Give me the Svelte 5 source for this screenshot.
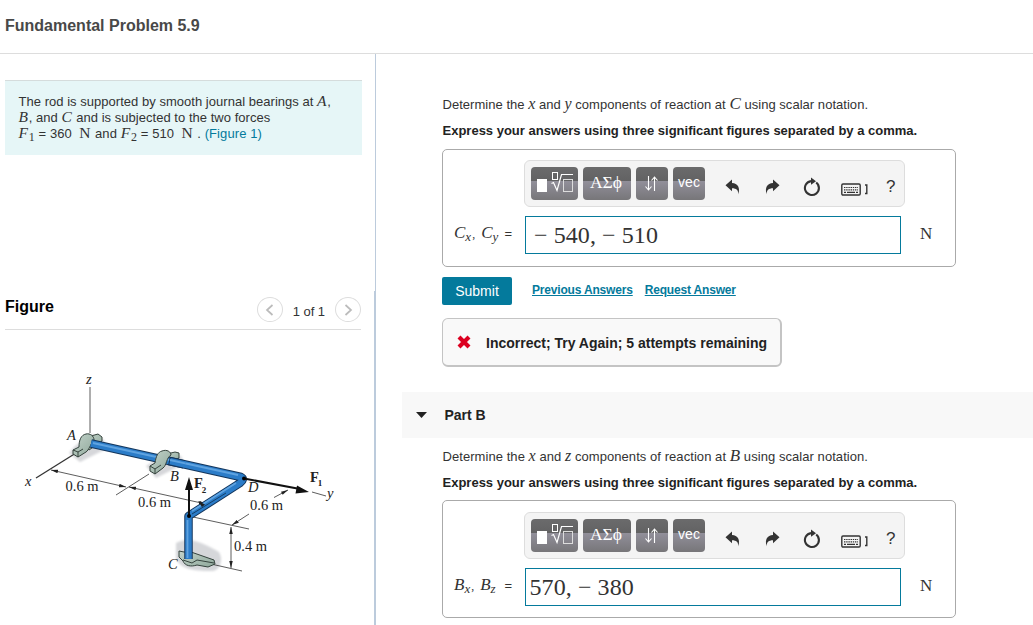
<script>
	let answerC = $state('− 540, − 510');
	let answerB = $state('570, − 380');
	let open = $state(true);
</script>

{#snippet toolbar()}
	<div class="toolbar">
		<button class="key template" aria-label="Templates">
			<svg width="47" height="33" viewBox="0 0 47 33" fill="none" stroke="#fff">
				<rect x="6" y="12" width="10" height="13" fill="#fff" stroke="none" />
				<rect x="21.500" y="5.500" width="5" height="7" />
				<path d="M20.500 16.500l2-1 3.500 8L30.500 7.500h11.500" stroke-width="1.200" />
				<rect x="32.500" y="12.500" width="9" height="12" stroke="#ddd" />
			</svg>
		</button>
		<button class="key greek">ΑΣϕ</button>
		<button class="key arrows" aria-label="Subscript and superscript">
			<svg width="32" height="33" viewBox="0 0 32 33" fill="none" stroke="#fff" stroke-width="1.100">
				<path d="M12.500 9v14M9.500 19.500l3 3.500 3-3.500M18.500 24V10M15.500 13.500l3-3.500 3 3.500" />
			</svg>
		</button>
		<button class="key vec">vec</button>
		<button class="tool undo" aria-label="Undo">
			<svg width="16" height="16" viewBox="0 0 16 16" fill="#333">
				<path d="M.5 6.300L7 .5v3.400c5.800.2 8.500 4.700 6.300 11.300.1-4-1.800-6-6.300-6v3z" />
			</svg>
		</button>
		<button class="tool redo" aria-label="Redo">
			<svg width="16" height="16" viewBox="0 0 16 16" fill="#333">
				<path d="M15.500 6.300L9 .5v3.400C3.200 4.100.5 8.600 2.700 15.200c-.1-4 1.800-6 6.300-6v3z" />
			</svg>
		</button>
		<button class="tool reset" aria-label="Reset">
			<svg width="18" height="20" viewBox="0 0 18 20">
				<path d="M13.200 5.500A7 7 0 1 1 8 4.100" fill="none" stroke="#333" stroke-width="2.100" />
				<path d="M8 .5l5 3.800-5 3.500z" fill="#333" />
			</svg>
		</button>
		<button class="tool keyboard" aria-label="Keyboard shortcuts">
			<svg width="28" height="13" viewBox="0 0 28 13" fill="none" stroke="#333">
				<rect x=".8" y="1" width="18.400" height="11" rx="1.200" stroke-width="1.400" />
				<path d="M3 4.500h14M3 6.800h14" stroke-width="1.200" stroke-dasharray="1.400 .8" />
				<path d="M3 9.300h2M6 9.300h8M15 9.300h2" stroke-width="1.200" />
				<path d="M24 2h1.800v8.500H24" stroke-width="1.400" />
			</svg>
		</button>
		<button class="tool help">?</button>
	</div>
{/snippet}

{#snippet variable(name, sub)}<i>{name}<sub>{sub}</sub></i>{/snippet}

<div class="page">
	<header>
		<h1>Fundamental Problem 5.9</h1>
	</header>

	<div class="columns">
		<aside>
			<div class="statement">
				<div>The rod is supported by smooth journal bearings at <i>A</i>,</div>
				<div><i>B</i>, and <i>C</i> and is subjected to the two forces</div>
				<div class="forces">
					<i>F</i><sub>1</sub> = 360&nbsp; <b>N</b> and <i>F</i><sub>2</sub> = 510&nbsp; <b>N</b> . <a href="#figure">(Figure 1)</a>
				</div>
			</div>

			<div class="figure-head">
				<h2>Figure</h2>
				<button class="round" aria-label="Previous figure">
					<svg width="10" height="12" viewBox="0 0 10 12"><path d="M7.500 1L2 6l5.500 5" /></svg>
				</button>
				<span>1 of 1</span>
				<button class="round" aria-label="Next figure">
					<svg width="10" height="12" viewBox="0 0 10 12"><path d="M2.500 1L8 6l-5.500 5" /></svg>
				</button>
			</div>

			<svg id="figure" class="diagram" width="374" height="235" viewBox="0 360 374 235">
				<defs>
					<filter id="soft" x="-30%" y="-30%" width="160%" height="160%"><feGaussianBlur stdDeviation="1.2" /></filter>
					<linearGradient id="metal" x2="1" y2="1">
						<stop stop-color="#c3d3ca" />
						<stop offset="1" stop-color="#8fa89b" />
					</linearGradient>
					<marker id="tip" viewBox="0 0 8 4" refX="8" refY="2" markerWidth="7" markerHeight="4" markerUnits="userSpaceOnUse" orient="auto-start-reverse">
						<path d="M0 0l8 2-8 2z" fill="#222" />
					</marker>
				</defs>

				<!-- ground shadows -->
				<g fill="#d6d7da" filter="url(#soft)">
					<path d="M69 453l11 9 26-13-2-9-12-6-17 12z" />
					<path d="M146 466l10 12 28-14-3-8-14-4z" />
					<path d="M176 543c12-7 26-1 43 9 5 9 0 19-7 19-20 0-32-2-36-13z" />
				</g>

				<!-- axes and dimensions -->
				<g class="thin">
					<path d="M90 387v46" />
					<path d="M76 453L36 478" stroke-width="1.300" />
					<path d="M149 474L116 495" />
					<path d="M51 470L126 487" marker-start="url(#tip)" marker-end="url(#tip)" />
					<path d="M129 487L206 504" marker-start="url(#tip)" marker-end="url(#tip)" />
					<path d="M193 517L249 529" />
					<path d="M274 497.500L288 490" marker-end="url(#tip)" />
					<path d="M249 514L232 525" marker-end="url(#tip)" />
					<path d="M231 527V568" marker-start="url(#tip)" marker-end="url(#tip)" />
					<path d="M211 564L242 571M312 492L326 496" />
				</g>

				<!-- journal bearings -->
				<g class="metal">
					<path d="M91 436l7-2 4 3v4l-13 9-3-5z" />
					<path d="M73 450l6-3c0-7 2-12 7-13 4-1 8 2 8 6-4 5-5 10-8 12l-8 5-5-3z" />
					<path d="M73 450l5 2 5-3M78 452v5" fill="none" />
					<path d="M167 454l8-2 4 1v5l-10 5-5-4z" />
					<path d="M179 551l5 1h7l23 8 1 4-7 3-11-2c-6 2-12 1-14-4l-4-4z" />
					<path d="M183 560l9 3 5-3 17 3" fill="none" />
				</g>

				<!-- bent rod -->
				<g class="rod">
					<path class="edge" d="M91 443.500L241 477q4 2-1 6L188.500 516v43" />
					<path class="body" d="M91 443.500L241 477q4 2-1 6L188.500 516v43" />
					<path class="shine" d="M93 443L238 475M236 483L192 511M187.500 520v38" />
				</g>
				<path d="M192 514L226 493" stroke="#143f68" />
				<path d="M205 504.500l-7-3.500 4 6z" fill="#222" />

				<!-- the bearing at B wraps the rod, which comes out on its right -->
				<g class="metal">
					<path d="M150 466l5-3c1-7 3-11 7-12 5-2 9 1 9 4-5 3-4 10-8 13l-8 6-5-3z" />
					<path d="M150 466l5 3 6-4M155 469v5" fill="none" />
				</g>
				<g class="rod">
					<path class="edge" d="M169 461L184 464.300" />
					<path class="body" d="M170 461.200L185 464.500" />
					<path class="shine" d="M170 460L185 463.400" />
				</g>

				<!-- forces -->
				<path d="M244 478.500L300 489M189 516V488" stroke="#111" stroke-width="2" />
				<path d="M309 492l-12-6.500-1.500 8zM189 477l-4 13h8z" fill="#111" />
				<circle cx="244" cy="478.500" r="2" />
				<circle cx="189" cy="516" r="2" />

				<g class="labels">
					<text class="it" x="86" y="384">z</text>
					<text class="it" x="67" y="440">A</text>
					<text class="it" x="25" y="486">x</text>
					<text class="it" x="170" y="481">B</text>
					<text class="it" x="248" y="492">D</text>
					<text class="it" x="168" y="569">C</text>
					<text class="it" x="327" y="498">y</text>
					<text x="65.500" y="491">0.6 m</text>
					<text x="138" y="507">0.6 m</text>
					<text x="250" y="510">0.6 m</text>
					<text x="234" y="551">0.4 m</text>
					<text class="bold" x="194" y="488">F<tspan dx="-1" dy="5" font-size="9">2</tspan></text>
					<text class="bold" x="310" y="482">F<tspan dx="-1" dy="4" font-size="9">1</tspan></text>
				</g>
			</svg>
		</aside>

		<div class="divider"></div>

		<main>
			<section>
				<p>Determine the <i class="lower">x</i> and <i class="lower">y</i> components of reaction at <i>C</i> using scalar notation.</p>
				<p class="strong">Express your answers using three significant figures separated by a comma.</p>

				<div class="answer">
					{@render toolbar()}
					<div class="entry">
						<label for="part-a">{@render variable('C', 'x')}<small>,</small>{@render variable('C', 'y')}<em>=</em></label>
						<input id="part-a" class="spaced" bind:value={answerC} />
						<span class="unit">N</span>
					</div>
				</div>

				<div class="actions">
					<button class="submit">Submit</button>
					<a href="#previous">Previous Answers</a>
					<a href="#request">Request Answer</a>
				</div>

				<div class="feedback">
					<svg width="14" height="14" viewBox="0 0 14 14"><path d="M2 2l10 10M12 2L2 12" stroke="#dc0020" stroke-width="4.200" /></svg>
					<span>Incorrect; Try Again; 5 attempts remaining</span>
				</div>
			</section>

			<button class="part" aria-expanded={open} onclick={() => (open = !open)}>
				<svg width="11" height="6" viewBox="0 0 11 6"><path d="M0 0h11L5.500 6z" fill="#222" /></svg>
				<span>Part B</span>
			</button>

			{#if open}
				<section class="second">
					<p>Determine the <i class="lower">x</i> and <i class="lower">z</i> components of reaction at <i>B</i> using scalar notation.</p>
					<p class="strong">Express your answers using three significant figures separated by a comma.</p>

					<div class="answer">
						{@render toolbar()}
						<div class="entry">
							<label for="part-b">{@render variable('B', 'x')}<small>,</small>{@render variable('B', 'z')}<em>=</em></label>
							<input id="part-b" bind:value={answerB} />
							<span class="unit">N</span>
						</div>
					</div>
				</section>
			{/if}
		</main>
	</div>
</div>

<style>
	:global(body) {
		background: #fff;
		overflow: hidden;
	}

	.page {
		height: 625px;
		overflow: hidden;
		font-family: 'Liberation Sans', Arial, sans-serif;
		font-size: 13px;
		color: #333;
	}

	button {
		padding: 0;
		border: 0;
		font-family: inherit;
		background: none;
	}

	svg {
		display: block;
		flex: none;
	}

	header {
		box-sizing: border-box;
		height: 54px;
		padding: 16px 5px;
		border-bottom: 1px solid #ddd;
	}

	h1 {
		margin: 0;
		font-size: 16px;
		line-height: 19px;
		color: #484848;
	}

	.columns {
		display: flex;
		height: 571px;
	}

	aside {
		width: 374px;
		padding-top: 26px;
	}

	.divider {
		width: 2px;
		background: linear-gradient(90deg, transparent 50%, #bccbdc 50%) 0 0 / 2px 237px no-repeat,
			linear-gradient(#bccbdc, #bccbdc) 0 237px / 2px 400px no-repeat;
	}

	.statement {
		box-sizing: border-box;
		width: 357px;
		height: 75px;
		margin-left: 5px;
		padding: 12px 0 0 13.5px;
		border-top: 1px solid #d5dcdc;
		background: #e6f6f7;
		line-height: 16px;
		letter-spacing: 0.03px;
		white-space: nowrap;
	}

	.statement div {
		height: 16px;
	}

	.statement i,
	.statement b {
		font: 15.5px/16px 'Liberation Serif', serif;
		letter-spacing: 0.8px;
	}

	.statement i,
	p i {
		font-style: italic;
	}

	p i {
		font: italic 17px/16px 'Liberation Serif', serif;
	}

	p .lower {
		font-size: 16px;
	}

	.statement sub {
		font: 12px/10px 'Liberation Serif', serif;
		vertical-align: -3px;
	}

	.statement .forces {
		letter-spacing: 0.09px;
	}

	a {
		color: #047a9c;
	}

	.statement a {
		text-decoration: none;
	}

	.figure-head {
		box-sizing: border-box;
		display: flex;
		align-items: center;
		width: 356px;
		height: 40px;
		margin: 135px 0 0 5px;
		border-bottom: 1px solid #ddd;
	}

	h2 {
		flex: 1;
		margin: 0 0 6px;
		font-size: 16px;
		color: #000;
	}

	.figure-head span {
		margin: 3px 10px 0;
		font-size: 13px;
		letter-spacing: -0.05px;
	}

	.round {
		box-sizing: border-box;
		display: grid;
		place-items: center;
		width: 26px;
		height: 25px;
		border: 1px solid #ddd;
		border-radius: 50%;
	}

	.round path {
		fill: none;
		stroke: #bbb;
		stroke-width: 1.7;
	}

	.diagram {
		margin-top: 30px;
	}

	.thin {
		fill: none;
		stroke: #333;
		stroke-width: 0.8;
	}

	.metal {
		fill: url(#metal);
		stroke: #35433d;
		stroke-width: 1;
		stroke-linejoin: round;
	}

	.rod {
		fill: none;
		stroke-linejoin: round;
	}

	.rod .edge {
		stroke: #14365c;
		stroke-width: 8.5;
	}

	.rod .body {
		stroke: #2b7cc8;
		stroke-width: 6.5;
	}

	.rod .shine {
		stroke: #5fa3e0;
		stroke-width: 1.8;
	}

	.labels {
		font: 14.5px 'Liberation Serif', serif;
		fill: #222;
	}

	.labels .it {
		font-style: italic;
	}

	.labels .bold {
		font-weight: bold;
	}

	main {
		flex: 1;
		padding: 42px 0 0 26px;
	}

	section {
		padding-left: 40px;
	}

	p {
		height: 16px;
		margin: 0 0 11px 0.5px;
		line-height: 16px;
		letter-spacing: 0.035px;
		white-space: nowrap;
	}

	.second p:first-child {
		letter-spacing: 0.06px;
	}

	p.strong {
		margin: 0 0 10px 0.5px;
		font-weight: bold;
		letter-spacing: 0;
		color: #222;
	}

	.answer {
		box-sizing: border-box;
		width: 514px;
		height: 118px;
		padding: 10px 0 0 10px;
		border: 1px solid #aaa;
		border-radius: 5px;
	}

	.toolbar {
		box-sizing: border-box;
		display: flex;
		width: 381px;
		height: 47px;
		margin-left: 71px;
		padding: 6px 0 0 6px;
		border: 1px solid #ddd;
		border-radius: 6px;
		background: #f4f4f4;
	}

	.key {
		height: 33px;
		margin-right: 5px;
		border-radius: 4px;
		background: linear-gradient(#6b6b6c, #626263 42%, #918f9a 43%, #777679);
		color: #fff;
	}

	.template {
		width: 47px;
	}

	.greek {
		width: 48px;
		padding: 0 2px 3px 0;
		font: 17.5px 'Liberation Serif', serif;
	}

	.arrows {
		width: 32px;
	}

	.vec {
		width: 32px;
		padding-bottom: 4px;
		font-size: 14px;
	}

	.tool {
		height: 16px;
		margin-top: 12px;
		color: #333;
	}

	.undo {
		margin-left: 15px;
	}

	.redo {
		margin-left: 23px;
	}

	.reset {
		height: 20px;
		margin: 10px 0 0 23px;
	}

	.keyboard {
		margin: 16px 0 0 20px;
		height: 13px;
	}

	.help {
		margin: 11px 0 0 17px;
		font-size: 17px;
		line-height: 18px;
	}

	.entry {
		display: flex;
		align-items: center;
		margin-top: 9px;
	}

	label {
		box-sizing: border-box;
		display: flex;
		align-items: baseline;
		width: 72px;
		padding: 0 0 3px 1px;
		font: 14px/20px 'Liberation Serif', serif;
	}

	label i {
		font-size: 17px;
	}

	label sub {
		font-size: 13px;
		line-height: 8px;
		vertical-align: -3px;
	}

	label small {
		width: 9px;
		padding-left: 1px;
	}

	label em {
		margin: 0 13px 0 auto;
		font: 13px 'Liberation Sans', sans-serif;
	}

	input {
		box-sizing: border-box;
		width: 376px;
		height: 38px;
		padding: 0 3.5px;
		border: 1px solid #047a9c;
		font: 24px 'Liberation Serif', serif;
		letter-spacing: 0.08px;
		color: #333;
	}

	.spaced {
		padding-left: 8px;
	}

	.unit {
		margin: 0 0 3px 19px;
		font: 17px 'Liberation Serif', serif;
	}

	.actions {
		display: flex;
		margin-top: 10px;
		font-size: 12px;
		font-weight: bold;
	}

	.submit {
		width: 70px;
		height: 28px;
		margin-right: 20px;
		border-radius: 2px;
		background: #047a9c;
		color: #fff;
		font-size: 14px;
	}

	.actions a {
		margin: 6px 12px 0 0;
		letter-spacing: -0.18px;
	}

	.feedback {
		box-sizing: border-box;
		display: flex;
		align-items: center;
		width: 340px;
		height: 49px;
		margin-top: 13px;
		padding-left: 14px;
		border: 1px solid #c4c4c4;
		border-right-width: 2px;
		border-bottom-width: 2px;
		border-radius: 6px;
		background: #f9f9f9;
		color: #222;
		font-size: 14px;
		font-weight: bold;
		white-space: nowrap;
	}

	.feedback span {
		margin: 1px 0 0 15px;
	}

	.part {
		display: flex;
		align-items: center;
		width: 100%;
		height: 46px;
		margin-top: 25px;
		padding-left: 14px;
		background: #f8f8f8;
		color: #222;
		font-size: 14px;
		font-weight: bold;
	}

	.part span {
		margin-left: 17.5px;
	}

	.second {
		padding-top: 10px;
	}

	.second .answer {
		margin-top: -1px;
		padding-top: 11px;
	}
</style>
